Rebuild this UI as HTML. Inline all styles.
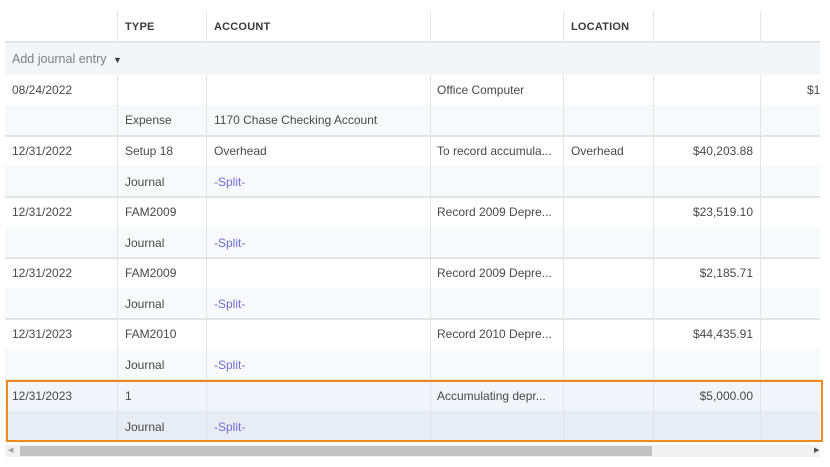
<!DOCTYPE html>
<html><head><meta charset="utf-8"><style>
body{margin:0;width:830px;height:467px;background:#fff;font-family:"Liberation Sans",sans-serif;font-size:12px;color:#48494c;position:relative;overflow:hidden}
.a{position:absolute}
.vl{position:absolute;top:12px;height:429px;width:1px;background:#e4e5e8}
.r{position:absolute;left:5px;width:815px;height:30px}
.t{position:absolute;white-space:nowrap;line-height:30px}
.h{font-size:11px;font-weight:bold;color:#393a3d;letter-spacing:.2px}
.s{color:#6d6fd0}
.sep{position:absolute;left:5px;width:815px;height:2px;background:#e3e4e7}
.amt{position:absolute;right:77px;text-align:right;line-height:30px}
</style></head><body>
<div class="r" style="top:43px;height:32px;background:#f4f5f8"></div>
<div class="r" style="top:105px;height:31px;background:#f8f9fa"></div>
<div class="r" style="top:166px;height:31px;background:#f8f9fa"></div>
<div class="r" style="top:227px;height:31px;background:#f8f9fa"></div>
<div class="r" style="top:288px;height:31px;background:#f8f9fa"></div>
<div class="r" style="top:349px;height:31px;background:#f8f9fa"></div>
<div class="r" style="top:381px;height:30px;background:#f1f4f9"></div>
<div class="r" style="top:411px;height:30px;background:#e8edf5"></div>
<div class="vl" style="left:117px"></div><div class="vl" style="left:206px"></div>
<div class="vl" style="left:430px"></div><div class="vl" style="left:563px"></div>
<div class="vl" style="left:653px"></div><div class="vl" style="left:760px"></div>
<div class="a" style="left:5px;top:43px;width:815px;height:32px;background:#f4f5f8"></div>
<div class="sep" style="top:41px"></div>
<div class="sep" style="top:135px"></div><div class="sep" style="top:196px"></div>
<div class="sep" style="top:257px"></div><div class="sep" style="top:318px"></div>
<div class="sep" style="top:379px"></div>
<div class="t h" style="left:125px;top:12px">TYPE</div>
<div class="t h" style="left:214px;top:12px">ACCOUNT</div>
<div class="t h" style="left:571px;top:12px">LOCATION</div>
<div class="t" style="left:12px;top:44px;color:#7c7f85;font-size:12.5px">Add journal entry <span style="font-size:9px;color:#393a3d;margin-left:3px">▼</span></div>
<div class="t" style="left:12px;top:75px">08/24/2022</div>
<div class="t" style="left:437px;top:75px">Office Computer</div>
<div class="a" style="left:760px;top:75px;width:60px;height:30px;overflow:hidden"><div class="t" style="left:47px;top:0">$1,000</div></div>
<div class="t" style="left:125px;top:105px">Expense</div>
<div class="t" style="left:214px;top:105px">1170 Chase Checking Account</div>
<div class="t" style="left:12px;top:136px">12/31/2022</div>
<div class="t" style="left:125px;top:136px">Setup 18</div>
<div class="t" style="left:214px;top:136px">Overhead</div>
<div class="t" style="left:437px;top:136px">To record accumula...</div>
<div class="t" style="left:571px;top:136px">Overhead</div>
<div class="amt" style="top:136px">$40,203.88</div>
<div class="t" style="left:125px;top:167px">Journal</div>
<div class="t s" style="left:214px;top:167px">-Split-</div>
<div class="t" style="left:12px;top:197px">12/31/2022</div>
<div class="t" style="left:125px;top:197px">FAM2009</div>
<div class="t" style="left:437px;top:197px">Record 2009 Depre...</div>
<div class="amt" style="top:197px">$23,519.10</div>
<div class="t" style="left:125px;top:228px">Journal</div>
<div class="t s" style="left:214px;top:228px">-Split-</div>
<div class="t" style="left:12px;top:258px">12/31/2022</div>
<div class="t" style="left:125px;top:258px">FAM2009</div>
<div class="t" style="left:437px;top:258px">Record 2009 Depre...</div>
<div class="amt" style="top:258px">$2,185.71</div>
<div class="t" style="left:125px;top:289px">Journal</div>
<div class="t s" style="left:214px;top:289px">-Split-</div>
<div class="t" style="left:12px;top:319px">12/31/2023</div>
<div class="t" style="left:125px;top:319px">FAM2010</div>
<div class="t" style="left:437px;top:319px">Record 2010 Depre...</div>
<div class="amt" style="top:319px">$44,435.91</div>
<div class="t" style="left:125px;top:350px">Journal</div>
<div class="t s" style="left:214px;top:350px">-Split-</div>
<div class="t" style="left:12px;top:381px">12/31/2023</div>
<div class="t" style="left:125px;top:381px">1</div>
<div class="t" style="left:437px;top:381px">Accumulating depr...</div>
<div class="amt" style="top:381px">$5,000.00</div>
<div class="t" style="left:125px;top:412px">Journal</div>
<div class="t s" style="left:214px;top:412px">-Split-</div>
<div class="a" style="left:6px;top:380px;width:813px;height:58px;border:2.5px solid #f08a1c"></div>
<div class="a" style="left:5px;top:445px;width:815px;height:12px;background:#f1f1f1"></div>
<div class="a" style="left:20px;top:446px;width:632px;height:10px;background:#c1c1c1"></div>
<div class="a" style="left:8px;top:445px;font-size:7px;color:#a0a0a0;line-height:12px">◀</div>
<div class="a" style="left:814px;top:445px;font-size:7px;color:#505050;line-height:12px">▶</div>
</body></html>
